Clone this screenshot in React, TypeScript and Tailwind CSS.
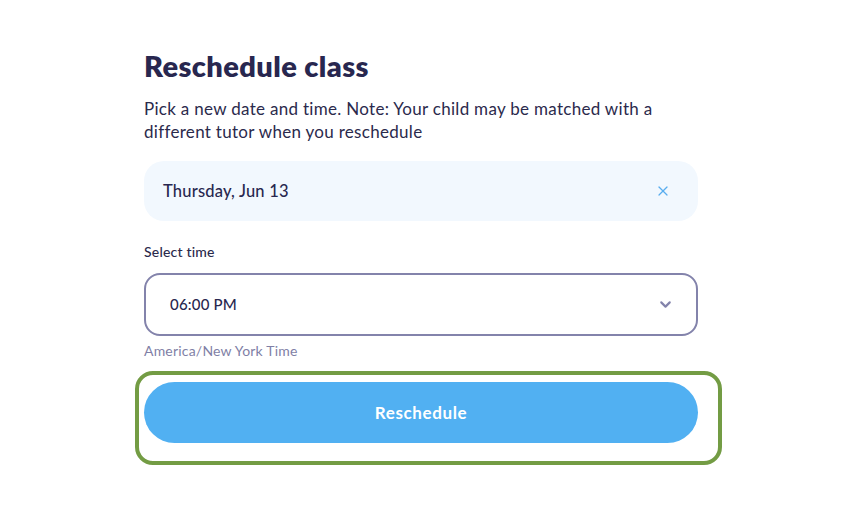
import { X, ChevronDown } from "lucide-react";

export default function App() {
  return (
    <div className="min-h-screen w-full bg-white font-['Lato',sans-serif]">
      <div className="ml-[144px] w-[554px] pt-[48px]">
        <h1 className="text-[29px] leading-[36px] font-extrabold tracking-[0.4px] text-[#28274f]">
          Reschedule class
        </h1>
        <p className="mt-[13px] text-[17px] leading-[23px] tracking-[0.3px] text-[#2b2a4c]">
          Pick a new date and time. Note: Your child may be matched with a different tutor when you reschedule
        </p>

        <div className="mt-[18px] flex h-[60px] items-center justify-between rounded-[20px] bg-[#f2f8fe] pl-[19px] pr-[27px]">
          <span className="text-[16.5px] font-medium tracking-[0.2px] text-[#28274f]">Thursday, Jun 13</span>
          <X className="h-[16px] w-[16px] text-[#59adef]" strokeWidth={1.8} />
        </div>

        <div className="mt-[20px] text-[14px] font-medium tracking-[0.2px] text-[#2b2a4c]">Select time</div>
        <div className="mt-[11px] flex h-[63px] items-center justify-between rounded-[16px] border-2 border-[#8383ab] pl-[24px] pr-[22px]">
          <span className="text-[15px] font-medium tracking-[0.2px] text-[#28274f]">06:00 PM</span>
          <ChevronDown className="h-[17px] w-[17px] text-[#8383ab]" strokeWidth={3} />
        </div>
        <div className="mt-[4px] text-[14px] tracking-[0.2px] text-[#7f7fa6]">America/New York Time</div>

        <div className="-ml-[9px] -mr-[24px] mt-[10px] rounded-[18px] border-[4px] border-[#739c44] pb-[18px] pl-[5px] pr-[20px] pt-[7px]">
          <button className="flex h-[61px] w-full items-center justify-center rounded-full bg-[#51b0f2] text-[17px] font-bold tracking-[0.6px] text-white">
            Reschedule
          </button>
        </div>
      </div>
    </div>
  );
}
